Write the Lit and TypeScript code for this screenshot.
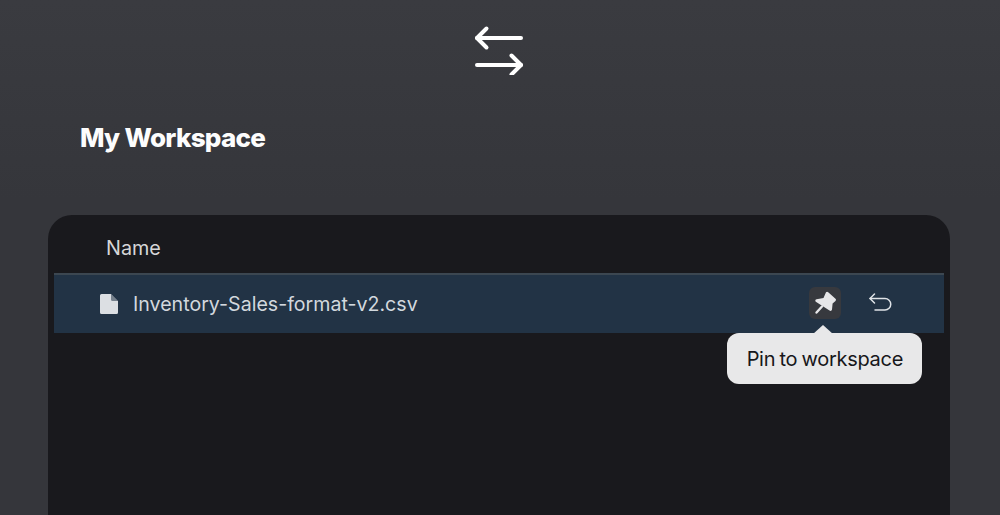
import { LitElement, html, css } from 'lit';
import { customElement } from 'lit/decorators.js';

@customElement('app-root')
export class AppRoot extends LitElement {
  static styles = css`
    :host {
      display: block;
      height: 515px;
      overflow: hidden;
      background: linear-gradient(#3a3b40, #35363b 200px);
      font-family: Inter, 'Liberation Sans', sans-serif;
    }

    .swap {
      display: flex;
      justify-content: center;
      padding: 25px 2px 0 0;
    }

    .swap svg {
      display: block;
      width: 50px;
      height: 50px;
    }

    .title {
      margin: 0;
      padding: 48px 0 0 80px;
      font-size: 26px;
      line-height: 30px;
      font-weight: 800;
      letter-spacing: -0.72px;
      color: #fdfdfd;
    }

    .panel {
      margin: 62px 50px 0 48px;
      height: 300px;
      padding: 0 6px;
      background: #19191d;
      border-radius: 24px 24px 0 0;
    }

    .head {
      height: 58px;
      box-sizing: border-box;
      padding: 22px 0 0 52px;
      font-size: 19.8px;
      line-height: 22px;
      color: #d6d6d8;
    }

    .row {
      position: relative;
      display: flex;
      align-items: center;
      height: 60px;
      box-sizing: border-box;
      padding: 0 52px 0 46px;
      background: #223345;
      border-top: 2px solid #3c4751;
    }

    .file-icon {
      width: 18px;
      height: 20px;
      margin-right: 15px;
      flex: none;
    }

    .name {
      flex: 1;
      font-size: 19.6px;
      color: #d2d8de;
    }

    .pin {
      display: flex;
      align-items: center;
      justify-content: center;
      width: 32px;
      height: 32px;
      margin: -2px 27px 0 0;
      border-radius: 6px;
      background: #37393e;
    }

    .pin svg {
      width: 24px;
      height: 24px;
    }

    .undo {
      width: 24px;
      height: 24px;
      margin-top: -5px;
    }

    .tooltip {
      position: absolute;
      top: 58px;
      right: 22px;
      padding: 0 19px 0 19.5px;
      height: 51px;
      display: flex;
      align-items: center;
      font-size: 20px;
      letter-spacing: -0.3px;
      word-spacing: -1px;
      color: #17171a;
      background: #e8e8e9;
      border-radius: 12px;
    }

    .tooltip::before {
      content: '';
      position: absolute;
      top: -8px;
      left: 86px;
      width: 0;
      height: 0;
      border-left: 10px solid transparent;
      border-right: 10px solid transparent;
      border-bottom: 9px solid #e8e8e9;
    }
  `;

  render() {
    return html`
      <div class="swap">
        <svg viewBox="0 0 50 50" fill="none" stroke="#fff" stroke-width="4" stroke-linecap="round" stroke-linejoin="round">
          <path d="M47 13H3" />
          <path d="M12.5 3.5 3 13l9.5 9.5" />
          <path d="M3 40h44" />
          <path d="M37.5 30.5 47 40l-9.5 9.5" />
        </svg>
      </div>
      <h1 class="title">My Workspace</h1>
      <div class="panel">
        <div class="head">Name</div>
        <div class="row">
          <svg class="file-icon" viewBox="0 0 18 20">
            <path fill="#dcdfe3" d="M1.5 0H11l7 7v11.5a1.5 1.5 0 0 1-1.5 1.5h-15A1.5 1.5 0 0 1 0 18.5v-17A1.5 1.5 0 0 1 1.5 0z" />
            <path fill="#223345" d="M11 0v5.5A1.5 1.5 0 0 0 12.5 7H18z" opacity=".55" />
          </svg>
          <span class="name">Inventory-Sales-format-v2.csv</span>
          <div class="pin">
            <svg viewBox="0 0 24 24">
              <path fill="#e6e6e8" d="M13 1.300a1.500 1.500 0 0 1 2.200-.1l7.300 6.600a1.500 1.500 0 0 1 0 2.200L19.600 12.600l-.6 5.900a1.500 1.500 0 0 1-2.500 1L2.800 10.800a1.500 1.500 0 0 1 .8-2.600l6.900-1.200z" />
              <path stroke="#e6e6e8" stroke-width="2.400" stroke-linecap="round" d="M9 15.500 3.500 21.500" />
            </svg>
          </div>
          <svg class="undo" viewBox="0 0 24 24" fill="none" stroke="#dfe3e7" stroke-width="1.500" stroke-linecap="round" stroke-linejoin="round">
            <path d="M6.500 4 2 8.500 6.500 13" />
            <path d="M2 8.500h15a5 5 0 0 1 0 11.500H7" />
          </svg>
          <div class="tooltip">Pin to workspace</div>
        </div>
      </div>
    `;
  }
}
